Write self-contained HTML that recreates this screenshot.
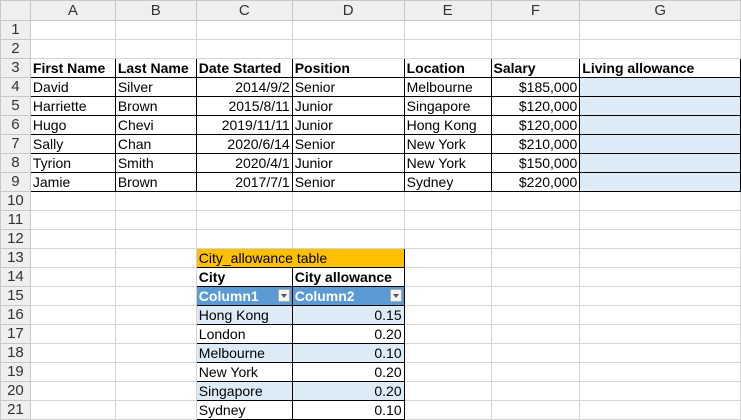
<!DOCTYPE html><html><head><style>
body{margin:0;width:741px;height:418px;overflow:hidden;background:#fff;font-family:"Liberation Sans",Arial,sans-serif;font-size:14px;color:#000}
table{border-collapse:collapse;table-layout:fixed;position:absolute;left:0;top:0}
td{border:1px solid #d4d4d4;height:18px;padding:0 2px;white-space:nowrap;overflow:visible;line-height:18px}
tr.h td{height:19px;background:#efefef;text-align:center;color:#333;border-color:#c8c8c8;font-size:15px;font-weight:normal}
td.r{background:#efefef;text-align:center;color:#333;border-color:#c8c8c8;padding:0;font-size:15px}
.b{border:1px solid #000}
.bold{font-weight:bold}
.n{text-align:right}
.g{background:#ddebf7}
.o{background:#ffc000}
.bl{background:#5b9bd5;color:#fff;position:relative}
.dd{position:absolute;right:2px;top:2px;width:12px;height:13px;background:#f3f3f3;border:1px solid #aaa;box-sizing:border-box}
.dd:after{content:"";position:absolute;left:2px;top:4px;border-left:3px solid transparent;border-right:3px solid transparent;border-top:4px solid #555}
</style></head><body>
<table>
<colgroup><col style="width:30px"><col style="width:85px"><col style="width:81px"><col style="width:96px"><col style="width:112px"><col style="width:87px"><col style="width:89px"><col style="width:161px"></colgroup>
<tr class="h"><td></td><td>A</td><td>B</td><td>C</td><td>D</td><td>E</td><td>F</td><td>G</td></tr>
<tr><td class="r">1</td><td></td><td></td><td></td><td></td><td></td><td></td><td></td></tr>
<tr><td class="r">2</td><td></td><td></td><td></td><td></td><td></td><td></td><td></td></tr>
<tr class="bold"><td class="r" style="font-weight:normal">3</td><td class="b">First Name</td><td class="b">Last Name</td><td class="b">Date Started</td><td class="b">Position</td><td class="b">Location</td><td class="b">Salary</td><td class="b">Living allowance</td></tr>
<tr><td class="r">4</td><td class="b">David</td><td class="b">Silver</td><td class="b n">2014/9/2</td><td class="b">Senior</td><td class="b">Melbourne</td><td class="b n">$185,000</td><td class="b g"></td></tr>
<tr><td class="r">5</td><td class="b">Harriette</td><td class="b">Brown</td><td class="b n">2015/8/11</td><td class="b">Junior</td><td class="b">Singapore</td><td class="b n">$120,000</td><td class="b g"></td></tr>
<tr><td class="r">6</td><td class="b">Hugo</td><td class="b">Chevi</td><td class="b n">2019/11/11</td><td class="b">Junior</td><td class="b">Hong Kong</td><td class="b n">$120,000</td><td class="b g"></td></tr>
<tr><td class="r">7</td><td class="b">Sally</td><td class="b">Chan</td><td class="b n">2020/6/14</td><td class="b">Senior</td><td class="b">New York</td><td class="b n">$210,000</td><td class="b g"></td></tr>
<tr><td class="r">8</td><td class="b">Tyrion</td><td class="b">Smith</td><td class="b n">2020/4/1</td><td class="b">Junior</td><td class="b">New York</td><td class="b n">$150,000</td><td class="b g"></td></tr>
<tr><td class="r">9</td><td class="b">Jamie</td><td class="b">Brown</td><td class="b n">2017/7/1</td><td class="b">Senior</td><td class="b">Sydney</td><td class="b n">$220,000</td><td class="b g"></td></tr>
<tr><td class="r">10</td><td></td><td></td><td></td><td></td><td></td><td></td><td></td></tr>
<tr><td class="r">11</td><td></td><td></td><td></td><td></td><td></td><td></td><td></td></tr>
<tr><td class="r">12</td><td></td><td></td><td></td><td></td><td></td><td></td><td></td></tr>
<tr><td class="r">13</td><td></td><td></td><td class="o" colspan="2" style="border:1px solid #000">City_allowance table</td><td></td><td></td><td></td></tr>
<tr class="bold"><td class="r" style="font-weight:normal">14</td><td></td><td></td><td class="b">City</td><td class="b">City allowance</td><td></td><td></td><td></td></tr>
<tr class="bold"><td class="r" style="font-weight:normal">15</td><td></td><td></td><td class="b bl">Column1<span class="dd"></span></td><td class="b bl">Column2<span class="dd"></span></td><td></td><td></td><td></td></tr>
<tr><td class="r">16</td><td></td><td></td><td class="b g">Hong Kong</td><td class="b g n">0.15</td><td></td><td></td><td></td></tr>
<tr><td class="r">17</td><td></td><td></td><td class="b">London</td><td class="b n">0.20</td><td></td><td></td><td></td></tr>
<tr><td class="r">18</td><td></td><td></td><td class="b g">Melbourne</td><td class="b g n">0.10</td><td></td><td></td><td></td></tr>
<tr><td class="r">19</td><td></td><td></td><td class="b">New York</td><td class="b n">0.20</td><td></td><td></td><td></td></tr>
<tr><td class="r">20</td><td></td><td></td><td class="b g">Singapore</td><td class="b g n">0.20</td><td></td><td></td><td></td></tr>
<tr><td class="r">21</td><td></td><td></td><td class="b">Sydney</td><td class="b n">0.10</td><td></td><td></td><td></td></tr>
</table>
</body></html>
